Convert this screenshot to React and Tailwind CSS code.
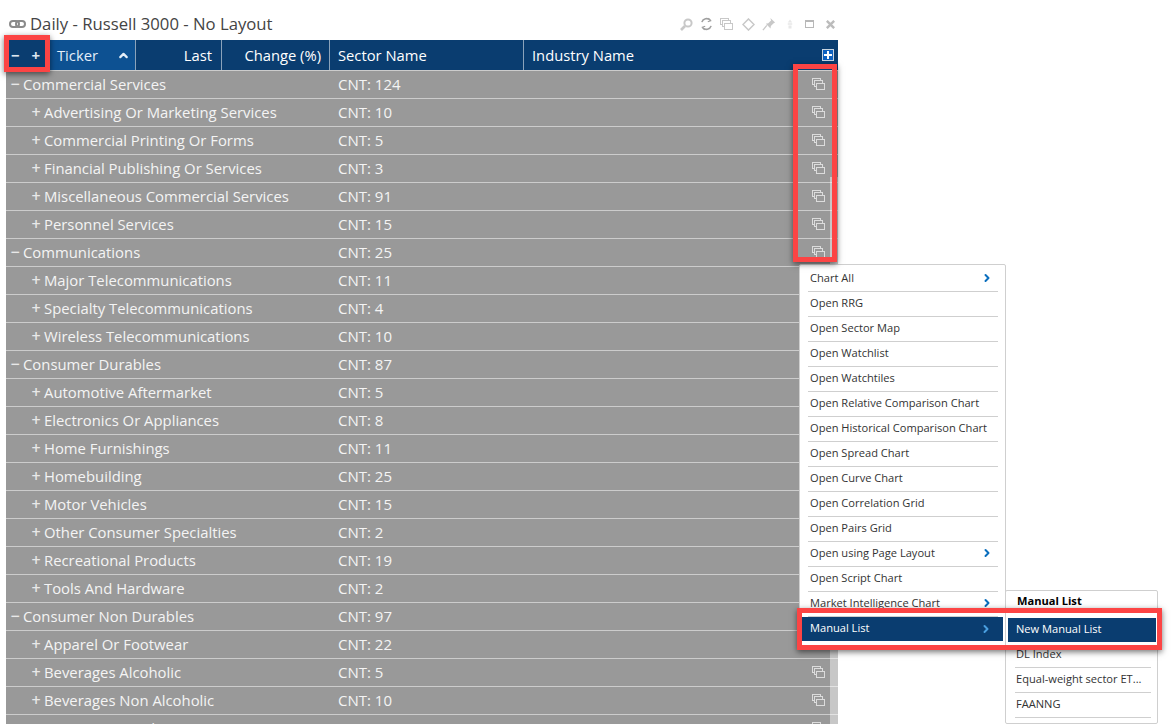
import { ChevronRight, ChevronUp } from 'lucide-react';

const ROWS = [
  ['Commercial Services', 124, 0],
  ['Advertising Or Marketing Services', 10, 1],
  ['Commercial Printing Or Forms', 5, 1],
  ['Financial Publishing Or Services', 3, 1],
  ['Miscellaneous Commercial Services', 91, 1],
  ['Personnel Services', 15, 1],
  ['Communications', 25, 0],
  ['Major Telecommunications', 11, 1],
  ['Specialty Telecommunications', 4, 1],
  ['Wireless Telecommunications', 10, 1],
  ['Consumer Durables', 87, 0],
  ['Automotive Aftermarket', 5, 1],
  ['Electronics Or Appliances', 8, 1],
  ['Home Furnishings', 11, 1],
  ['Homebuilding', 25, 1],
  ['Motor Vehicles', 15, 1],
  ['Other Consumer Specialties', 2, 1],
  ['Recreational Products', 19, 1],
  ['Tools And Hardware', 2, 1],
  ['Consumer Non Durables', 97, 0],
  ['Apparel Or Footwear', 22, 1],
  ['Beverages Alcoholic', 5, 1],
  ['Beverages Non Alcoholic', 10, 1],
  ['Consumer Sundries', 9, 1],
];

const MENU = [
  ['Chart All', true],
  ['Open RRG'],
  ['Open Sector Map'],
  ['Open Watchlist'],
  ['Open Watchtiles'],
  ['Open Relative Comparison Chart'],
  ['Open Historical Comparison Chart'],
  ['Open Spread Chart'],
  ['Open Curve Chart'],
  ['Open Correlation Grid'],
  ['Open Pairs Grid'],
  ['Open using Page Layout', true],
  ['Open Script Chart'],
  ['Market Intelligence Chart', true],
];

function CopyIcon() {
  return (
    <svg width="13" height="12" viewBox="0 0 13 12" fill="none" stroke="#dcdcdc" strokeWidth="1">
      <rect x="0.5" y="0.5" width="8" height="6" />
      <rect x="2.5" y="2.5" width="8" height="6" fill="#999999" />
      <rect x="4.5" y="5.5" width="8" height="6" fill="#999999" />
    </svg>
  );
}

function WindowIcons() {
  return (
    <div className="flex items-center text-[#c8c8c8]">
      <svg width="13" height="13" viewBox="0 0 13 13" fill="none" stroke="currentColor">
        <circle cx="8" cy="5" r="3.6" strokeWidth="2" />
        <path d="M5 8 1 12" strokeWidth="2.6" />
      </svg>
      <svg width="13" height="14" viewBox="0 0 14 14" fill="none" stroke="#a0a0a0" strokeWidth="1.7" className="ml-[7px]">
        <path d="M2 5a5.3 5.3 0 0 1 9-2" />
        <path d="M12 9a5.3 5.3 0 0 1-9 2" />
        <path d="m9 .6 2.6 2.8L8.4 4.6M5 13.4 2.4 10.6l3.2-1.2" strokeWidth="1.2" />
      </svg>
      <svg width="13" height="12" viewBox="0 0 13 12" fill="none" stroke="currentColor" className="ml-[7px]">
        <rect x="0.5" y="0.5" width="8" height="6" />
        <rect x="2.5" y="2.5" width="8" height="6" fill="#fff" />
        <rect x="4.5" y="5.5" width="8" height="6" fill="#fff" />
      </svg>
      <svg width="13" height="13" viewBox="0 0 14 14" fill="none" stroke="currentColor" strokeWidth="1.6" className="ml-[9px]">
        <path d="M7 1 13 7 7 13 1 7z" />
      </svg>
      <svg width="14" height="14" viewBox="0 0 15 15" fill="currentColor" className="ml-[7px]">
        <path d="M9 1l5 5-1.5.6-3 3-.4 2.6-5-5 2.6-.4 3-3z" />
        <path d="M5.2 9 1 14" stroke="currentColor" strokeWidth="1.4" />
      </svg>
      <svg width="6" height="12" viewBox="0 0 8 12" fill="#e8e8e8" className="ml-[11px]">
        <path d="M4 0 7 4H1zM1 5h6v2H1zM2 8h4v4H2z" />
      </svg>
      <span className="w-[9px] h-[8px] border border-[#b8b8b8] border-t-2 ml-[12px]" />
      <svg width="9" height="9" viewBox="0 0 11 11" stroke="#bcbcbc" strokeWidth="3" className="ml-[12px]">
        <path d="M1 1l9 9M10 1l-9 9" />
      </svg>
    </div>
  );
}

function Row({ name, count, indent }) {
  return (
    <div className="flex items-center h-[28px] bg-[#999999] border-b border-[#cccccc] text-[#f4f4f4]">
      <div className={`flex items-center w-[323px] shrink-0 ${indent ? 'pl-[24px]' : 'pl-[3px]'}`}>
        <span className="w-[12px] mr-[2px] text-[16px] leading-none font-semibold text-[#e8e8e8] text-center">{indent ? '+' : '−'}</span>
        <span className="text-[14.85px] whitespace-nowrap">{name}</span>
      </div>
      <div className="ml-[9px] text-[15px]">CNT: {count}</div>
      <div className="ml-auto mr-[13px] mb-[2px] flex"><CopyIcon /></div>
    </div>
  );
}

function HeadCell({ className = '', children }) {
  return <div className={`flex items-center h-full border-r border-[#8ba3bb] whitespace-nowrap ${className}`}>{children}</div>;
}

// red call-out rectangles drawn over the screenshot
function Callout({ className }) {
  return <div className={`absolute border-[5px] border-[#fc4444] shadow-[0_2px_6px_rgba(0,0,0,0.55)] pointer-events-none ${className}`} />;
}

export default function App() {
  return (
    <div className="relative w-[1172px] h-[724px] overflow-hidden bg-white" style={{ fontFamily: '"Open Sans", sans-serif' }}>
      <div className="w-[832px] ml-[6px]">
        <div className="flex items-center h-[40px] pl-[3px] pr-[3px] pt-[8px]">
          <svg width="17" height="8" viewBox="0 0 17 8" fill="none" stroke="#8a8a8a" strokeWidth="2" className="mr-[4px] shrink-0">
            <rect x="1" y="1" width="9" height="6" rx="3" />
            <rect x="7" y="1" width="9" height="6" rx="3" />
          </svg>
          <span className="text-[16.7px] text-[#444444] whitespace-nowrap">Daily - Russell 3000 - No Layout</span>
          <div className="ml-auto"><WindowIcons /></div>
        </div>

        <div className="flex items-center h-[31px] bg-[#0a3d70] border-b border-[#cccccc] text-white text-[14.75px]">
          <div className="flex items-center justify-between w-[42px] h-full pl-[5px] pr-[8px] text-[15px] font-bold text-[#dde6ef]">
            <span>−</span><span>+</span>
          </div>
          <HeadCell className="w-[88px] justify-between pl-[9px] pr-[5px] bg-[#0d5192] text-[#e4eef8]">
            <span>Ticker</span>
            <ChevronUp size={13} strokeWidth={4} />
          </HeadCell>
          <HeadCell className="w-[86px] justify-end pr-[9px]">Last</HeadCell>
          <HeadCell className="w-[108px] justify-end pr-[8px]">Change (%)</HeadCell>
          <HeadCell className="w-[194px] pl-[8px]">Sector Name</HeadCell>
          <div className="pl-[8px] flex-1">Industry Name</div>
          <div className="flex items-center justify-center w-[12px] h-[12px] mr-[4px] bg-[#0f62c0] border border-[#c8d4e0]">
            <svg width="8" height="8" viewBox="0 0 8 8" stroke="#ffffff" strokeWidth="2"><path d="M4 0v8M0 4h8" /></svg>
          </div>
        </div>

        <div className="relative">
          {ROWS.map(([name, count, indent]) => (
            <Row key={name} name={name} count={count} indent={indent} />
          ))}
          <div className="absolute top-[106px] right-0 bottom-0 w-[8px] bg-white/45" />
        </div>
      </div>

      {/* context menu */}
      <div className="absolute left-[799px] top-[264px] w-[207px] h-[385px] bg-white border border-[#cfcfcf] rounded-[2px] pt-[2px] pl-[8px] pr-[7px] text-[11.1px] text-[#333333]">
        {MENU.map(([label, hasSub]) => (
          <div key={label} className="flex items-center justify-between h-[25px] pb-[2px] border-b border-[#cfcfcf] pl-[2px] pr-[5px]">
            <span className="whitespace-nowrap">{label}</span>
            {hasSub && <ChevronRight size={12} strokeWidth={4} className="text-[#0a6ebd]" />}
          </div>
        ))}
      </div>

      {/* sub menu */}
      <div className="absolute left-[1005px] top-[590px] w-[153px] h-[134px] bg-white border border-[#cfcfcf] rounded-[2px] pl-[9px] pr-[6px] text-[11.1px] text-[#333333]">
        <div className="flex items-center h-[21px] pl-[2px] font-bold text-black whitespace-nowrap">Manual List</div>
        <div className="h-[31px]" />
        <div className="flex items-center h-[25px] pb-[2px] pl-[1px] border-b border-[#cfcfcf]">DL Index</div>
        <div className="flex items-center h-[25px] pb-[2px] pl-[1px] border-b border-[#cfcfcf] whitespace-nowrap">Equal-weight sector ET...</div>
        <div className="flex items-center h-[25px] pb-[2px] pl-[1px] border-b border-[#cfcfcf]">FAANNG</div>
      </div>

      {/* highlighted rows */}
      <div className="absolute left-[802px] top-[617px] flex items-center justify-between w-[201px] h-[24px] pl-[8px] pr-[11px] pb-[1px] bg-[#0a3d70] text-white text-[11.1px]">
        <span>Manual List</span>
        <ChevronRight size={12} strokeWidth={4} className="text-[#4a9fe0]" />
      </div>
      <div className="absolute left-[1008px] top-[618px] flex items-center w-[148px] h-[24px] pl-[8px] pb-[2px] bg-[#0a3d70] text-white text-[11.1px]">New Manual List</div>

      <Callout className="left-[4px] top-[35px] w-[46px] h-[37px]" />
      <Callout className="left-[793px] top-[64px] w-[44px] h-[198px]" />
      <Callout className="left-[797px] top-[608px] w-[365px] h-[42px]" />
    </div>
  );
}
